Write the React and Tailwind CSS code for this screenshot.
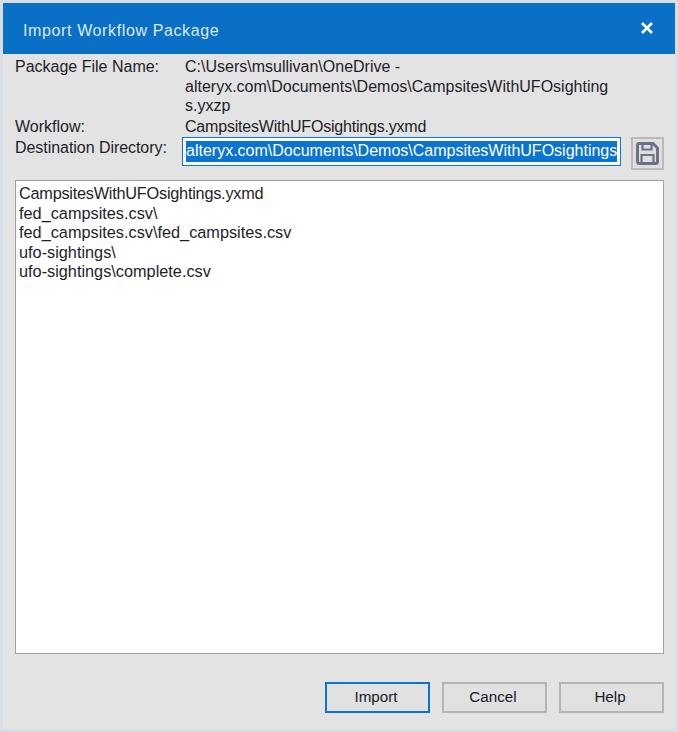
const files = [
  { name: 'CampsitesWithUFOsightings.yxmd', cls: 'tracking-[-0.24px]' },
  { name: 'fed_campsites.csv\\', cls: '' },
  { name: 'fed_campsites.csv\\fed_campsites.csv', cls: '' },
  { name: 'ufo-sightings\\', cls: '' },
  { name: 'ufo-sightings\\complete.csv', cls: '' },
];

function Btn({ label, primary }) {
  return (
    <button className={`w-[105px] h-[31px] pr-[3px] flex items-center justify-center bg-[#e1e1e1] text-[15.2px] text-[#1a1a2a] ${primary ? 'border-[2px] border-[#0a74cf]' : 'border-[2px] border-[#b4b4b4]'}`}>
      {label}
    </button>
  );
}

export default function App() {
  return (
    <div className="w-[678px] h-[732px] p-[3px] bg-[#d9dde6] text-[16px] text-[#1e1e28]" style={{ fontFamily: '"Liberation Sans", Arial, sans-serif' }}>
      <div className="h-full flex flex-col bg-[#e3e3e3]">
        <div className="h-[51px] shrink-0 flex items-center justify-between bg-[#0a70c6] pl-[20px] pr-[21px] text-white">
          <span className="text-[16px] tracking-[0.62px] text-[#dbe9f6] mt-[4px]">Import Workflow Package</span>
          <svg width="14" height="14" viewBox="0 0 14 14" className="mb-[1px]"><path d="M2 2 L12 12 M12 2 L2 12" stroke="#fff" strokeWidth="2.6" /></svg>
        </div>
        <div className="flex-1 flex flex-col pl-[12px] pr-[11px]">
          <div className="grid grid-cols-[170px_1fr] leading-[19.5px] pt-[3px]">
            <div>Package File Name:</div>
            <div>
              <div>C:\Users\msullivan\OneDrive -</div>
              <div>alteryx.com\Documents\Demos\CampsitesWithUFOsighting</div>
              <div>s.yxzp</div>
            </div>
            <div className="mt-[1px]">Workflow:</div>
            <div className="mt-[1px] tracking-[-0.2px]">CampsitesWithUFOsightings.yxmd</div>
          </div>
          <div className="flex items-start h-[41px] mt-[2px]">
            <div className="w-[167px] leading-[19.5px] tracking-[-0.05px]">Destination Directory:</div>
            <div className="w-[439px] h-[29px] mt-[-1px] border-[1px] border-[#0a78d7] bg-white p-[3px] overflow-hidden">
              <div className="h-full bg-[#0a74d0] text-white leading-[20px] whitespace-nowrap overflow-hidden">alteryx.com\Documents\Demos\CampsitesWithUFOsightings</div>
            </div>
            <div className="ml-[10px] mt-[-1px] w-[33px] h-[33px] border-[2px] border-[#bababa] bg-[#dfdfdf] flex items-center justify-center">
              <svg width="25" height="25" viewBox="0 0 25 25" fill="none" stroke="#6b7487" strokeWidth="3"><path d="M4 2.5 H18 L22.5 7 V20.5 Q22.5 22.5 20.5 22.5 H4.5 Q2.5 22.5 2.5 20.5 V4 Q2.5 2.5 4 2.5 Z" /><path d="M7.5 3 V8.5 H16.5 V3" strokeWidth="2.2" /><path d="M6.5 22 V14 H18.5 V22" strokeWidth="2.2" /></svg>
            </div>
          </div>
          <div className="h-[474px] mt-[1px] border-[1px] border-[#a0a0a0] bg-white pl-[3px] pt-[3px] leading-[19.5px] text-[16.3px]">
            {files.map(f => <div key={f.name} className={f.cls}>{f.name}</div>)}
          </div>
          <div className="flex justify-end gap-[12px] mt-[28px]">
            <Btn label="Import" primary />
            <Btn label="Cancel" />
            <Btn label="Help" />
          </div>
        </div>
      </div>
    </div>
  );
}
